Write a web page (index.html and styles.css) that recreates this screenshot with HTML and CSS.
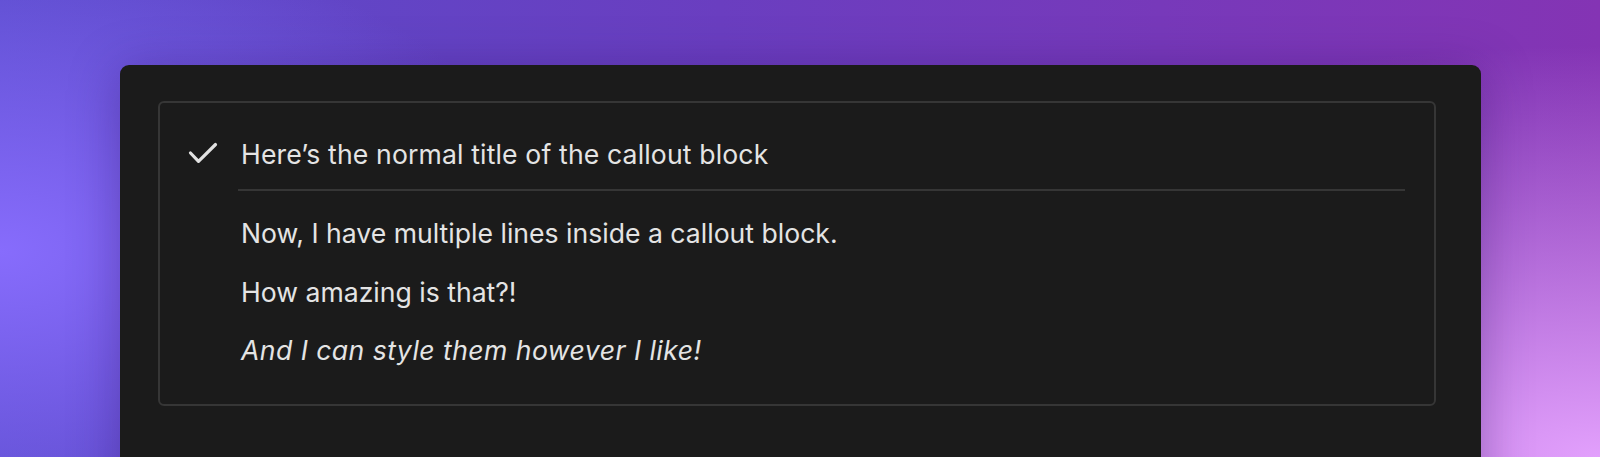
FILE: index.html
```html
<!DOCTYPE html>
<html lang="en">
<head>
<meta charset="utf-8">
<title>Callout block</title>
<link rel="stylesheet" href="styles.css">
</head>
<body>
  <main class="window">
    <section class="callout">
      <div class="callout-head">
        <svg class="check" width="30" height="26" viewBox="0 0 30 26" aria-hidden="true">
          <path d="M2.5 13 L10.5 21.3 L27.5 4.5" fill="none" stroke="#e2e2e2" stroke-width="3.2" stroke-linecap="round" stroke-linejoin="round"/>
        </svg>
        <div class="callout-title">Here’s the normal title of the callout block</div>
      </div>
      <div class="callout-body">
        <p class="line">Now, I have multiple lines inside a callout block.</p>
        <p class="line">How amazing is that?!</p>
        <p class="line italic">And I can style them however I like!</p>
      </div>
    </section>
  </main>
</body>
</html>
```

FILE: styles.css
```css
* { box-sizing: border-box; }

html, body {
  margin: 0;
  padding: 0;
  height: 100%;
  overflow: hidden;
}

body {
  font-family: Inter, "Noto Sans", "Liberation Sans", sans-serif;
  background-color: #7a48d0;
  background-image:
    radial-gradient(ellipse 60% 90% at 100% 100%, rgba(226,160,252,1) 0%, rgba(226,160,252,0.55) 45%, rgba(226,160,252,0) 100%),
    radial-gradient(ellipse 35% 70% at 0% 55%, rgba(135,108,252,1) 0%, rgba(135,108,252,0) 100%),
    linear-gradient(90deg, #5a4bcb 0%, #6a3ec0 45%, #8434b4 100%);
  padding: 65px 119px 0 120px;
}

.window {
  background: #1b1b1b;
  border-radius: 9px;
  height: 460px;
  padding: 36px 45px 0 38px;
  box-shadow: 0 6px 50px rgba(40, 10, 90, 0.35);
}

.callout {
  border: 2px solid #363636;
  border-radius: 6px;
  padding: 33px 29px 36px 28px;
  color: #e4e4e4;
}

.callout-head {
  display: flex;
  align-items: flex-start;
}

.check {
  display: block;
  flex: none;
  margin-top: 4px;
  margin-right: 20px;
}

.callout-title {
  flex: 1;
  font-size: 26.6px;
  line-height: 36px;
  letter-spacing: 0.14px;
  padding-left: 3px;
  padding-bottom: 17px;
  border-bottom: 2px solid #363636;
}

.callout-body {
  margin-left: 50px;
  padding-top: 24px;
}

.line {
  margin: 0 0 22.5px 0;
  font-size: 26.6px;
  line-height: 36px;
  padding-left: 3px;
}

.line:last-child { margin-bottom: 0; }

.italic {
  font-style: italic;
  letter-spacing: 0.45px;
}
```
